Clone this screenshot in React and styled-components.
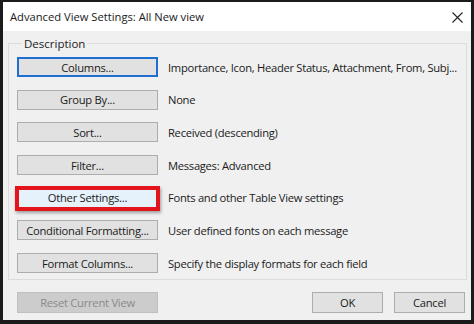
import styled, { createGlobalStyle } from "styled-components"

const GlobalStyle = createGlobalStyle`
    html, body {
        margin: 0;
        padding: 0;
        background: #1b1b1b;
    }
    body {
        font-family: "Open Sans", "Noto Sans", "Liberation Sans", sans-serif;
        -webkit-font-smoothing: antialiased;
    }
`

const Screen = styled.div`
    width: 474px;
    height: 324px;
    padding: 2px 3px 4px 3px;
    box-sizing: border-box;
    background: #1b1b1b;
`

const Dialog = styled.div`
    height: 100%;
    display: flex;
    flex-direction: column;
    background: #f0f0f0;
`

const TitleBar = styled.div`
    height: 29px;
    flex: none;
    display: flex;
    align-items: center;
    justify-content: space-between;
    padding: 0 8px 0 7px;
    background: #ffffff;
    color: #1a1a1a;
    font-size: 11.2px;
`

const CloseIcon = styled.svg`
    width: 11px;
    height: 11px;
    margin-top: 1px;
`

const Body = styled.div`
    flex: 1;
    display: flex;
    flex-direction: column;
    padding: 5px 4px 0 5px;
`

const GroupBox = styled.fieldset`
    margin: 0;
    min-width: 0;
    padding: 6px 8px 6px 8px;
    border: 1px solid #dcdcdc;
    display: flex;
    flex-direction: column;
    gap: 12.7px;

    legend {
        padding: 0 2px;
        margin-left: 5px;
        font-size: 11.5px;
        color: #1a1a1a;
    }
`

const Row = styled.div`
    position: relative;
    display: flex;
    align-items: center;
    gap: 10px;
    min-width: 0;
`

const Button = styled.div`
    width: ${(p) => p.$width || 141}px;
    height: ${(p) => p.$height || 20}px;
    flex: none;
    box-sizing: border-box;
    display: flex;
    align-items: center;
    justify-content: center;
    font-size: 11.2px;
    letter-spacing: -0.25px;
    color: ${(p) => (p.$disabled ? "#8a8a8a" : "#1a1a1a")};
    background: ${(p) => (p.$hover ? "#e5f1fb" : p.$disabled ? "#cccccc" : "#e1e1e1")};
    border: ${(p) =>
        p.$focus ? "2px solid #1f6fd1" : p.$hover ? "1px solid #0078d7" : p.$disabled ? "1px solid #bfbfbf" : "1px solid #adadad"};
`

const Highlight = styled.div`
    position: absolute;
    left: -2px;
    top: -2px;
    width: 145px;
    height: 25px;
    box-sizing: border-box;
    border: 4px solid #e3141c;
    box-shadow: 1px 2px 3px rgba(0, 0, 0, 0.35);
    pointer-events: none;
`

const Info = styled.span`
    font-size: 11.2px;
    letter-spacing: -0.28px;
    color: #1a1a1a;
    white-space: nowrap;
`

const Footer = styled.div`
    display: flex;
    align-items: center;
    gap: 11px;
    padding: 12px 2px 0 9px;
`

const Spacer = styled.div`
    flex: 1;
`

const rows = [
    { label: "Columns...", info: "Importance, Icon, Header Status, Attachment, From, Subj...", focus: true },
    { label: "Group By...", info: "None" },
    { label: "Sort...", info: "Received (descending)" },
    { label: "Filter...", info: "Messages: Advanced" },
    { label: "Other Settings...", info: "Fonts and other Table View settings", hover: true },
    { label: "Conditional Formatting...", info: "User defined fonts on each message" },
    { label: "Format Columns...", info: "Specify the display formats for each field" },
]

const App = () => {
    return (
        <>
            <GlobalStyle />
            <Screen>
                <Dialog>
                    <TitleBar>
                        <span>Advanced View Settings: All New view</span>
                        <CloseIcon viewBox="0 0 11 11">
                            <path d="M0.5 0.5 L10.5 10.5 M10.5 0.5 L0.5 10.5" stroke="#222" strokeWidth="1.1" fill="none" />
                        </CloseIcon>
                    </TitleBar>
                    <Body>
                        <GroupBox>
                            <legend>Description</legend>
                            {rows.map((r) => (
                                <Row key={r.label}>
                                    <Button $focus={r.focus} $hover={r.hover}>{r.label}</Button>
                                    <Info>{r.info}</Info>
                                    {r.hover && <Highlight />}
                                </Row>
                            ))}
                        </GroupBox>
                        <Footer>
                            <Button $disabled $height={21}>Reset Current View</Button>
                            <Spacer />
                            <Button $width={71} $height={21}>OK</Button>
                            <Button $width={71} $height={21}>Cancel</Button>
                        </Footer>
                    </Body>
                </Dialog>
            </Screen>
        </>
    )
}

export default App
